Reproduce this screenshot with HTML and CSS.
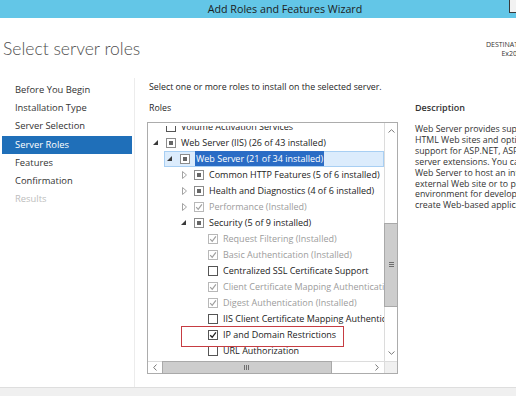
FILE: index.html
```html
<!DOCTYPE html>
<html lang="en">
<head>
    <meta charset="UTF-8">
    <title>Add Roles and Features Wizard</title>
    <link rel="stylesheet" href="styles.css">
</head>
<body>
    <div id="wizard">
        <div class="titlebar">
            <span class="titlebar-text">Add Roles and Features Wizard</span>
            <span class="titlebar-btn"></span>
        </div>
        <div class="head">
            <h1>Select server roles</h1>
            <div class="dest">
                <div>DESTINATION SERVER</div>
                <div>Ex2016.labs.local</div>
            </div>
        </div>
        <div class="content">
            <ul class="steps">
                <li>Before You Begin</li>
                <li>Installation Type</li>
                <li>Server Selection</li>
                <li class="active">Server Roles</li>
                <li>Features</li>
                <li>Confirmation</li>
                <li class="disabled">Results</li>
            </ul>
            <div class="main">
                <p class="intro">Select one or more roles to install on the selected server.</p>
                <h2>Roles</h2>
                <div class="tree">
                    <div class="tree-view">
                        <div class="tree-clip">
                            <div class="tree-rows">
                                <div class="row l0"><span class="exp"></span><span class="cb"></span><span class="label">Volume Activation Services</span></div>
                                <div class="row l0"><span class="exp"><svg width="6" height="6" viewBox="0 0 6 6"><path d="M5 0V5H0Z" fill="#3a3a3a"/></svg></span><span class="cb part"></span><span class="label">Web Server (IIS) (26 of 43 installed)</span></div>
                                <div class="row l1 sel"><span class="exp"><svg width="6" height="6" viewBox="0 0 6 6"><path d="M5 0V5H0Z" fill="#3a3a3a"/></svg></span><span class="cb part"></span><span class="label"><span class="hl">Web Server (21 of 34 installed)</span></span></div>
                                <div class="row l2"><span class="exp"><svg width="5" height="8" viewBox="0 0 5 8"><path d="M0.5 0.5L4.5 4L0.5 7.5Z" fill="none" stroke="#a3a3a3"/></svg></span><span class="cb part"></span><span class="label">Common HTTP Features (5 of 6 installed)</span></div>
                                <div class="row l2"><span class="exp"><svg width="5" height="8" viewBox="0 0 5 8"><path d="M0.5 0.5L4.5 4L0.5 7.5Z" fill="none" stroke="#a3a3a3"/></svg></span><span class="cb part"></span><span class="label">Health and Diagnostics (4 of 6 installed)</span></div>
                                <div class="row l2 grey"><span class="exp"><svg width="5" height="8" viewBox="0 0 5 8"><path d="M0.5 0.5L4.5 4L0.5 7.5Z" fill="none" stroke="#a3a3a3"/></svg></span><span class="cb done"><svg width="8" height="8" viewBox="0 0 8 8"><path d="M1.2 4.2L3.2 6.3L6.9 1.3" fill="none" stroke="#a0a0a0" stroke-width="1.2"/></svg></span><span class="label">Performance (Installed)</span></div>
                                <div class="row l2"><span class="exp"><svg width="6" height="6" viewBox="0 0 6 6"><path d="M5 0V5H0Z" fill="#3a3a3a"/></svg></span><span class="cb part"></span><span class="label">Security (5 of 9 installed)</span></div>
                                <div class="row l3 grey"><span class="exp"></span><span class="cb done"><svg width="8" height="8" viewBox="0 0 8 8"><path d="M1.2 4.2L3.2 6.3L6.9 1.3" fill="none" stroke="#a0a0a0" stroke-width="1.2"/></svg></span><span class="label">Request Filtering (Installed)</span></div>
                                <div class="row l3 grey"><span class="exp"></span><span class="cb done"><svg width="8" height="8" viewBox="0 0 8 8"><path d="M1.2 4.2L3.2 6.3L6.9 1.3" fill="none" stroke="#a0a0a0" stroke-width="1.2"/></svg></span><span class="label">Basic Authentication (Installed)</span></div>
                                <div class="row l3"><span class="exp"></span><span class="cb"></span><span class="label">Centralized SSL Certificate Support</span></div>
                                <div class="row l3 grey"><span class="exp"></span><span class="cb done"><svg width="8" height="8" viewBox="0 0 8 8"><path d="M1.2 4.2L3.2 6.3L6.9 1.3" fill="none" stroke="#a0a0a0" stroke-width="1.2"/></svg></span><span class="label">Client Certificate Mapping Authentication (Installed)</span></div>
                                <div class="row l3 grey"><span class="exp"></span><span class="cb done"><svg width="8" height="8" viewBox="0 0 8 8"><path d="M1.2 4.2L3.2 6.3L6.9 1.3" fill="none" stroke="#a0a0a0" stroke-width="1.2"/></svg></span><span class="label">Digest Authentication (Installed)</span></div>
                                <div class="row l3"><span class="exp"></span><span class="cb"></span><span class="label">IIS Client Certificate Mapping Authentication</span></div>
                                <div class="row l3"><span class="exp"></span><span class="cb"><svg width="8" height="8" viewBox="0 0 8 8"><path d="M1.2 4.2L3.2 6.3L6.9 1.3" fill="none" stroke="#222" stroke-width="1.3"/></svg></span><span class="label">IP and Domain Restrictions</span></div>
                                <div class="row l3"><span class="exp"></span><span class="cb"></span><span class="label">URL Authorization</span></div>
                                <div class="row l3"><span class="exp"></span><span class="cb"></span><span class="label">Windows Authentication</span></div>
                            </div>
                        </div>
                        <div class="callout"></div>
                    </div>
                    <div class="vscroll">
                        <span class="sb-btn"><svg width="7" height="4" viewBox="0 0 7 4"><path d="M0.5 3.5L3.5 0.7L6.5 3.5" fill="none" stroke="#7a7a7a"/></svg></span>
                        <span class="vthumb"><svg width="5" height="6" viewBox="0 0 5 6"><path d="M0 0.5H5M0 2.5H5M0 4.5H5" stroke="#6e6e6e"/></svg></span>
                        <span class="sb-btn down"><svg width="7" height="4" viewBox="0 0 7 4"><path d="M0.5 0.5L3.5 3.3L6.5 0.5" fill="none" stroke="#7a7a7a"/></svg></span>
                    </div>
                    <div class="hscroll">
                        <span class="sb-btn side"><svg width="4" height="7" viewBox="0 0 4 7"><path d="M3.5 0.5L0.7 3.5L3.5 6.5" fill="none" stroke="#7a7a7a"/></svg></span>
                        <span class="hthumb"><svg width="6" height="5" viewBox="0 0 6 5"><path d="M0.5 0V5M2.5 0V5M4.5 0V5" stroke="#6e6e6e"/></svg></span>
                        <span class="sb-btn side right"><svg width="4" height="7" viewBox="0 0 4 7"><path d="M0.5 0.5L3.3 3.5L0.5 6.5" fill="none" stroke="#7a7a7a"/></svg></span>
                    </div>
                    <div class="corner"></div>
                </div>
            </div>
            <div class="desc">
                <h2>Description</h2>
                <p>Web Server provides support for<br>HTML Web sites and optional<br>support for ASP.NET, ASP, and Web<br>server extensions. You can use the<br>Web Server to host an internal or<br>external Web site or to provide an<br>environment for developers to<br>create Web-based applications.</p>
            </div>
        </div>
        <div class="footer"></div>
    </div>
</body>
</html>
```

FILE: styles.css
```css
* {
    box-sizing: border-box;
    margin: 0;
    padding: 0;
}
body {
    font-family: "Open Sans", "Liberation Sans", sans-serif;
    color: #262626;
    background: #ffffff;
    overflow: hidden;
}
#wizard {
    width: 516px;
    height: 396px;
    display: flex;
    flex-direction: column;
    overflow: hidden;
}
.titlebar {
    flex: none;
    height: 18px;
    display: flex;
    background: #63c6e7;
}
.titlebar-text {
    flex: none;
    width: 509px;
    padding-left: 61px;
    text-align: center;
    font-size: 10.7px;
    line-height: 18px;
    color: #1c1c1c;
}
.titlebar-btn {
    flex: none;
    width: 12px;
    height: 13px;
    border: 1px solid #3a3a3a;
    border-top: none;
    background: #f2f2f2;
}
.head {
    flex: none;
    height: 60px;
    display: flex;
}
h1 {
    flex: 1;
    font-family: "Lato", "Open Sans", sans-serif;
    font-size: 17.5px;
    font-weight: 300;
    line-height: 22px;
    color: #505050;
    padding: 20px 0 0 3px;
}
.dest {
    flex: none;
    width: 80px;
    margin-right: -41px;
    padding-top: 22px;
    text-align: right;
    font-size: 7px;
    line-height: 9px;
    color: #333333;
    white-space: nowrap;
}
.content {
    flex: 1;
    display: flex;
}
.steps {
    flex: none;
    width: 135px;
    list-style: none;
    border-right: 1px solid #ececec;
    padding-top: 3px;
}
.steps li {
    height: 18.2px;
    line-height: 18.2px;
    margin: 0 2px;
    padding-left: 13px;
    font-size: 9.4px;
    color: #333333;
}
.steps li.active {
    background: #1f6fb9;
    color: #ffffff;
}
.steps li.disabled {
    color: #bdbdbd;
}
.main {
    flex: none;
    width: 263px;
    padding: 2.5px 0 0 12px;
}
.intro {
    font-size: 8.8px;
    line-height: 12px;
    padding-left: 2px;
    white-space: nowrap;
}
.main h2 {
    font-size: 8.8px;
    font-weight: normal;
    line-height: 12px;
    margin-top: 9.5px;
    padding-left: 2px;
}
.tree {
    margin-top: 7.5px;
    width: 251px;
    height: 252px;
    border: 1px solid #acacac;
    display: grid;
    grid-template-columns: 236px 13px;
    grid-template-rows: 238px 12px;
}
.tree-view {
    position: relative;
    padding-top: 3px;
}
.tree-clip {
    height: 100%;
    overflow: hidden;
}
.tree-rows {
    margin-top: -7px;
}
.row {
    height: 16px;
    display: flex;
    align-items: center;
    white-space: nowrap;
    font-size: 9px;
    color: #222222;
    margin-left: 2px;
}
.row.l1 { margin-left: 16px; }
.row.l2 { margin-left: 30px; }
.row.l3 { margin-left: 44px; }
.row.grey { color: #9c9c9c; }
.row.sel {
    background: #dcecfc;
    box-shadow: inset 0 0 0 1px #a8cff3;
}
.exp {
    flex: none;
    width: 12px;
    height: 16px;
    display: flex;
    align-items: center;
    justify-content: center;
}
.cb {
    flex: none;
    width: 10px;
    height: 10px;
    margin-left: 4px;
    border: 1px solid #555555;
    background: #ffffff;
    display: flex;
    align-items: center;
    justify-content: center;
}
.cb.part {
    border-color: #8c8c8c;
}
.cb.part::after {
    content: "";
    width: 4px;
    height: 4px;
    background: #666666;
}
.cb.done {
    border-color: #b8b8b8;
}
.label {
    margin-left: 5px;
}
.hl {
    background: #2a6cc5;
    color: #ffffff;
    padding: 1px 1px;
}
.callout {
    position: absolute;
    left: 33px;
    top: 203px;
    width: 163px;
    height: 21px;
    border: 1.5px solid #c63c42;
}
.vscroll {
    display: flex;
    flex-direction: column;
    border-left: 1px solid #dcdcdc;
    background: #ffffff;
}
.sb-btn {
    flex: none;
    height: 16px;
    display: flex;
    align-items: center;
    justify-content: center;
}
.sb-btn.down {
    margin-top: auto;
}
.vthumb {
    margin: 84px -1px 0 -1px;
    height: 84px;
    background: #cdcdcd;
    border: 1px solid #a9a9a9;
    display: flex;
    align-items: center;
    justify-content: center;
}
.hscroll {
    display: flex;
    border-top: 1px solid #dcdcdc;
    background: #ffffff;
}
.sb-btn.side {
    width: 14px;
    height: auto;
}
.sb-btn.right {
    margin-left: auto;
}
.hthumb {
    width: 170px;
    margin: -1px 0;
    background: #cdcdcd;
    border: 1px solid #a9a9a9;
    display: flex;
    align-items: center;
    justify-content: center;
}
.corner {
    background: #f0f0f0;
    border-top: 1px solid #dcdcdc;
    border-left: 1px solid #dcdcdc;
}
.desc {
    flex: none;
    width: 200px;
    padding: 24px 0 0 17px;
    white-space: nowrap;
}
.desc h2 {
    font-size: 9px;
    font-weight: 600;
    line-height: 12px;
    color: #333333;
}
.desc p {
    margin-top: 10px;
    font-size: 8.8px;
    line-height: 10.9px;
    color: #333333;
}
.footer {
    flex: none;
    height: 9px;
    border-top: 1px solid #dedede;
    background: #f0f0f0;
}
```
